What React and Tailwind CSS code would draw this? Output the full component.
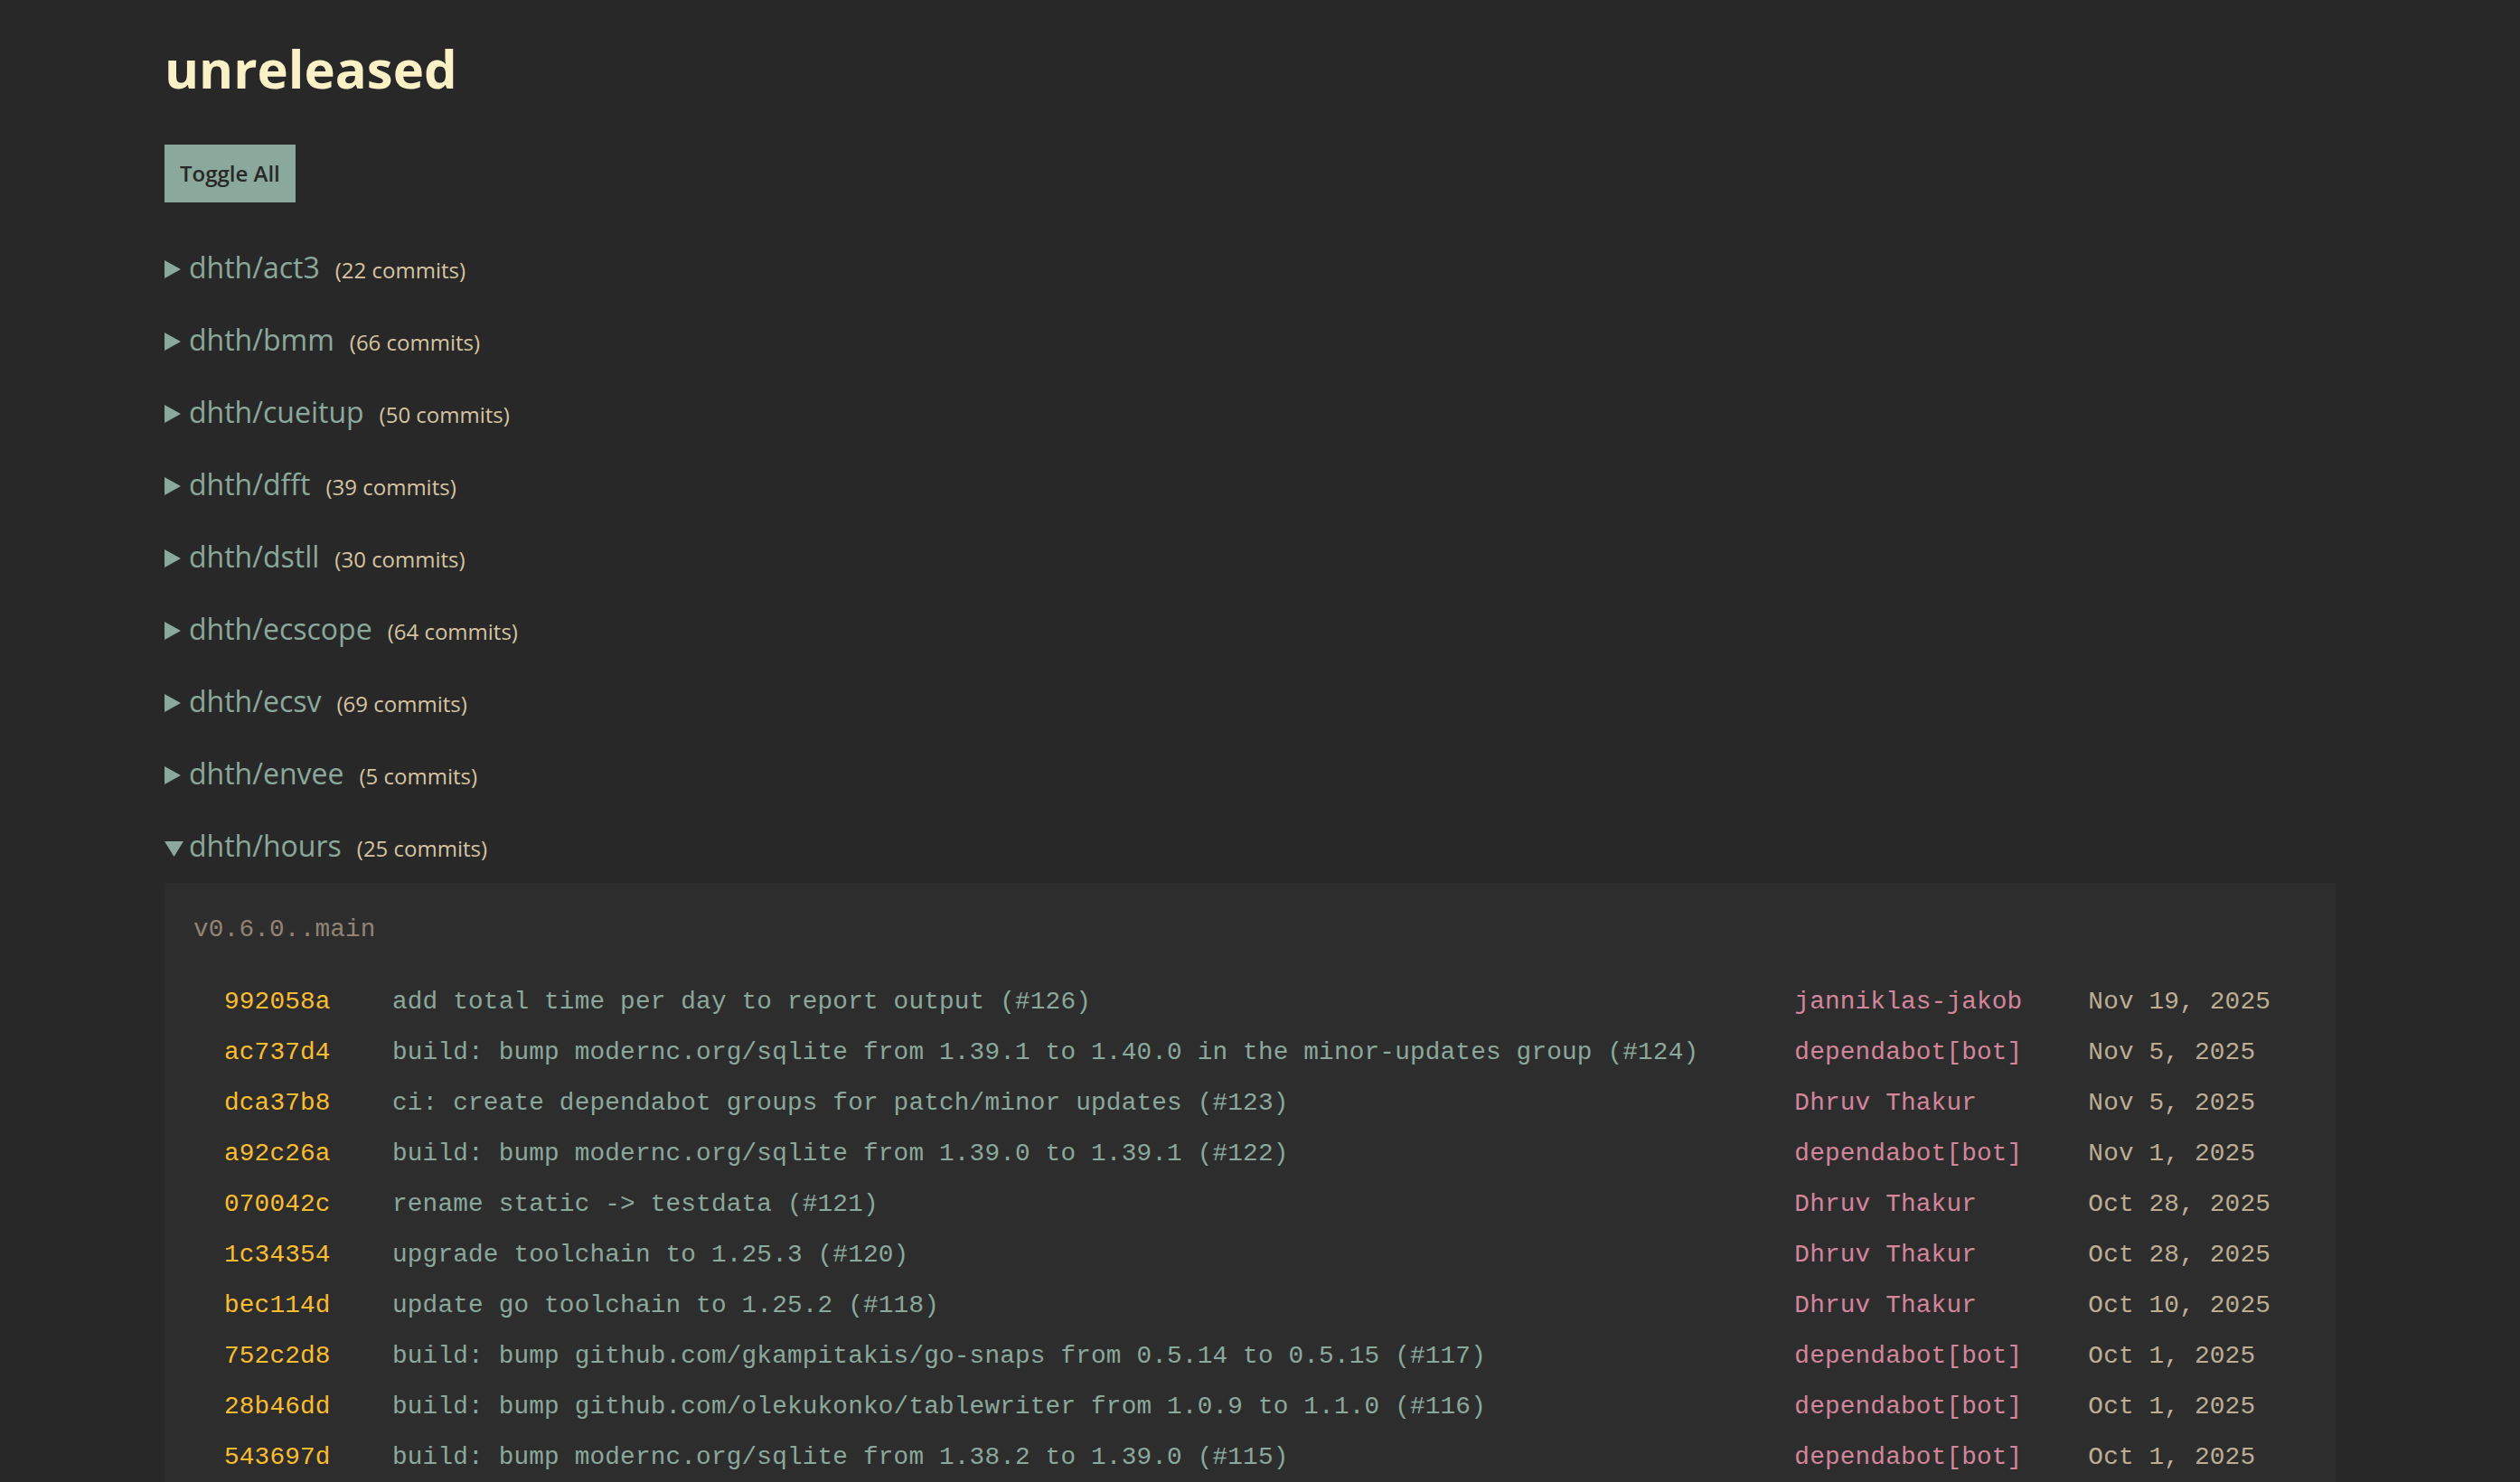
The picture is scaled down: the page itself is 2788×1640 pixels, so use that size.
import { useState } from 'react';

const repos = [
    { name: 'dhth/act3', count: 22 },
    { name: 'dhth/bmm', count: 66 },
    { name: 'dhth/cueitup', count: 50 },
    { name: 'dhth/dfft', count: 39 },
    { name: 'dhth/dstll', count: 30 },
    { name: 'dhth/ecscope', count: 64 },
    { name: 'dhth/ecsv', count: 69 },
    { name: 'dhth/envee', count: 5 },
    { name: 'dhth/hours', count: 25, range: 'v0.6.0..main' }
];

const hoursCommits = [
    ['992058a', 'add total time per day to report output (#126)', 'janniklas-jakob', 'Nov 19, 2025'],
    ['ac737d4', 'build: bump modernc.org/sqlite from 1.39.1 to 1.40.0 in the minor-updates group (#124)', 'dependabot[bot]', 'Nov 5, 2025'],
    ['dca37b8', 'ci: create dependabot groups for patch/minor updates (#123)', 'Dhruv Thakur', 'Nov 5, 2025'],
    ['a92c26a', 'build: bump modernc.org/sqlite from 1.39.0 to 1.39.1 (#122)', 'dependabot[bot]', 'Nov 1, 2025'],
    ['070042c', 'rename static -> testdata (#121)', 'Dhruv Thakur', 'Oct 28, 2025'],
    ['1c34354', 'upgrade toolchain to 1.25.3 (#120)', 'Dhruv Thakur', 'Oct 28, 2025'],
    ['bec114d', 'update go toolchain to 1.25.2 (#118)', 'Dhruv Thakur', 'Oct 10, 2025'],
    ['752c2d8', 'build: bump github.com/gkampitakis/go-snaps from 0.5.14 to 0.5.15 (#117)', 'dependabot[bot]', 'Oct 1, 2025'],
    ['28b46dd', 'build: bump github.com/olekukonko/tablewriter from 1.0.9 to 1.1.0 (#116)', 'dependabot[bot]', 'Oct 1, 2025'],
    ['543697d', 'build: bump modernc.org/sqlite from 1.38.2 to 1.39.0 (#115)', 'dependabot[bot]', 'Oct 1, 2025']
];

// disclosure triangle, same footprint open or closed so names line up
const Marker = ({ open }) =>
    open ? (
        <svg width="21" height="17" viewBox="0 0 21 17" className="mr-[-3px] mb-[2px] shrink-0">
            <polygon points="0,0 21,0 10.5,17" fill="#8aa89b" />
        </svg>
    ) : (
        <svg width="18" height="20" viewBox="0 0 18 20" className="shrink-0">
            <polygon points="0,0 18,10 0,20" fill="#8aa89b" />
        </svg>
    );

const App = () => {
    const [open, setOpen] = useState({ 'dhth/hours': true });

    const toggle = (name) => setOpen({ ...open, [name]: !open[name] });

    const toggleAll = () => {
        const anyClosed = repos.some((r) => !open[r.name]);
        const next = {};
        repos.forEach((r) => (next[r.name] = anyClosed));
        setOpen(next);
    };

    return (
        <div className="min-h-screen bg-[#282828] pl-[182px] pt-[46px] font-['Open_Sans',sans-serif]">
            <h1 className="text-[58px] leading-[60px] font-bold text-[#fbf1c7]">unreleased</h1>

            <button
                onClick={toggleAll}
                className="mt-[54px] flex h-[64px] items-center bg-[#8aa89b] px-[17px] text-[24px] font-semibold text-[#282828]"
            >
                Toggle All
            </button>

            <div className="mt-[33px]">
                {repos.map((repo) => (
                    <div key={repo.name}>
                        <div className="flex h-[80px] items-center">
                            <div
                                onClick={() => toggle(repo.name)}
                                className="flex cursor-pointer items-baseline leading-[44px]"
                            >
                                <Marker open={open[repo.name]} />
                                <span className="ml-[9px] text-[32px] text-[#8aa89b]">{repo.name}</span>
                                <span className="ml-[17px] text-[24px] text-[#d5c4a1]">({repo.count} commits)</span>
                            </div>
                        </div>

                        {open[repo.name] && repo.range && (
                            <div className="w-[2402px] bg-[#2e2d2e] pl-[32px] pr-[72px] pt-[36px] pb-[32px] font-['Liberation_Mono',monospace] text-[27.7px] tracking-[0.19px]">
                                <div className="leading-[32px] text-[#928374]">{repo.range}</div>
                                <div className="mt-[36px] grid grid-cols-[186px_1fr_325px_auto] pl-[34px] leading-[56px]">
                                    {hoursCommits.map(([hash, msg, author, date]) => (
                                        <div key={hash} className="contents">
                                            <span className="text-[#fabd2f]">{hash}</span>
                                            <span className="whitespace-pre text-[#8aa89b]">{msg}</span>
                                            <span className="whitespace-pre text-[#d3869b]">{author}</span>
                                            <span className="whitespace-pre text-[#bdae93]">{date}</span>
                                        </div>
                                    ))}
                                </div>
                            </div>
                        )}
                    </div>
                ))}
            </div>
        </div>
    );
};

export default App;
